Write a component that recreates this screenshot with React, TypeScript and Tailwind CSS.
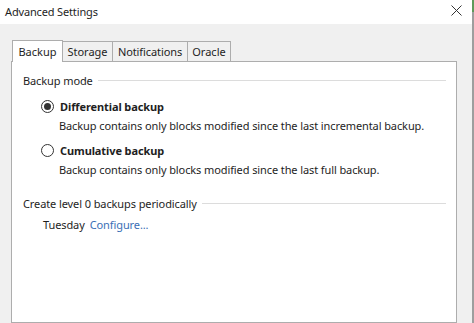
import React from "react";

const font = { fontFamily: '"Noto Sans", "Open Sans", sans-serif' };

function Radio({ checked }: { checked: boolean }) {
  return (
    <span className="w-[13px] h-[13px] rounded-full border border-[#333333] bg-white flex items-center justify-center shrink-0">
      {checked && <span className="w-[7px] h-[7px] rounded-full bg-[#333333]" />}
    </span>
  );
}

function Section({ label }: { label: string }) {
  return (
    <div className="flex items-center gap-[5px] h-[18px]">
      <span className="whitespace-nowrap">{label}</span>
      <span className="flex-1 h-px bg-[#dcdcdc]" />
    </div>
  );
}

export default function App() {
  return (
    <div
      className="w-[474px] h-[323px] bg-[#f0f0f0] flex overflow-hidden text-[#1e1e1e]"
      style={font}
    >
      <div className="flex-1 min-w-0 flex flex-col">
        <div className="h-[24px] bg-white flex items-center justify-between pl-[5px] pr-[10px]">
          <span className="text-[11px] tracking-[-0.15px] leading-none mt-[-2px]">Advanced Settings</span>
          <svg width="11" height="11" viewBox="0 0 11 11" className="mt-[-4px]">
            <path d="M0.5 0.5 L10.5 10.5 M10.5 0.5 L0.5 10.5" stroke="#333" strokeWidth="1" />
          </svg>
        </div>
        <div className="flex-1 flex flex-col pt-[15px] pl-[11px] pr-[15px]">
          <div className="flex items-end h-[22px] text-[11px] relative z-10 pl-[1px]">
            <div className="w-[51px] h-[22px] bg-white border border-b-0 border-[#adadad] flex items-center justify-center leading-none mb-[-1px] pb-[1px]">
              Backup
            </div>
            <div className="w-[50px] h-[20px] bg-[#f0f0f0] border border-l-0 border-b-0 border-[#adadad] flex items-center justify-center leading-none">
              Storage
            </div>
            <div className="w-[75px] h-[20px] bg-[#f0f0f0] border border-l-0 border-b-0 border-[#adadad] flex items-center justify-center leading-none tracking-[-0.1px]">
              Notifications
            </div>
            <div className="w-[43px] h-[20px] bg-[#f0f0f0] border border-l-0 border-b-0 border-[#adadad] flex items-center justify-center leading-none">
              Oracle
            </div>
          </div>
          <div className="flex-1 min-w-0 bg-white border border-[#adadad] pt-[9px] pl-[11px] pr-[10px] text-[11px] tracking-[-0.1px] leading-none">
            <Section label="Backup mode" />
            <div className="pl-[18px] mt-[8px] flex flex-col">
              <div className="flex items-center gap-[6px] h-[18px]">
                <Radio checked />
                <span className="font-bold">Differential backup</span>
              </div>
              <div className="pl-[18px] h-[18px] mt-[1px] flex items-center whitespace-nowrap">
                Backup contains only blocks modified since the last incremental backup.
              </div>
              <div className="flex items-center gap-[6px] h-[18px] mt-[7px]">
                <Radio checked={false} />
                <span className="font-bold">Cumulative backup</span>
              </div>
              <div className="pl-[18px] h-[18px] mt-[1px] flex items-center whitespace-nowrap">
                Backup contains only blocks modified since the last full backup.
              </div>
            </div>
            <div className="mt-[16px]">
              <Section label="Create level 0 backups periodically" />
            </div>
            <div className="pl-[20px] mt-[3px] h-[18px] flex items-center gap-[5px]">
              <span>Tuesday</span>
              <span className="text-[#3b6fb6]">Configure...</span>
            </div>
          </div>
        </div>
      </div>
      <div className="w-[2px] flex flex-col">
        <div className="h-[12px] bg-[#5f9a5a]" />
        <div className="flex-1 bg-[#9e9e9e]" />
      </div>
    </div>
  );
}
